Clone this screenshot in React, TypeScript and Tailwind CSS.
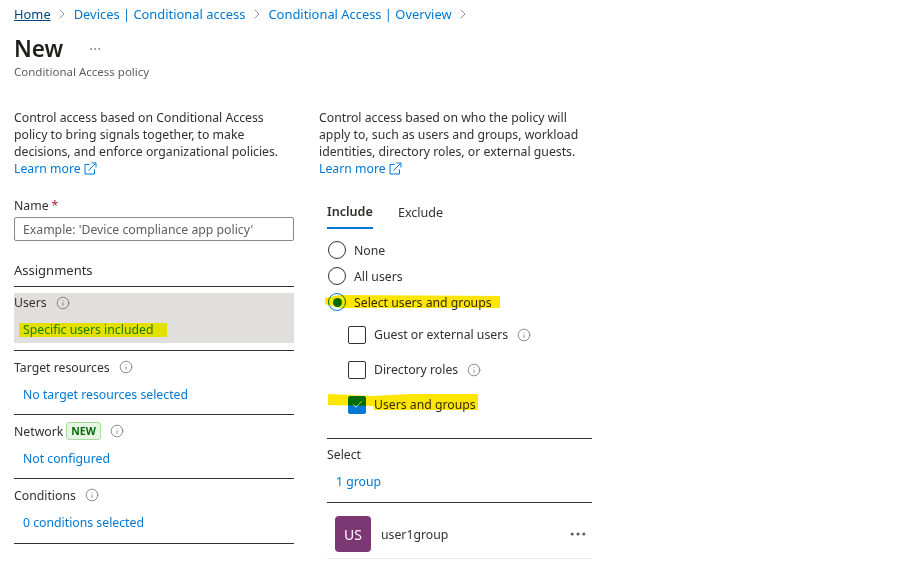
import { Check, ChevronRight, Info, MoreHorizontal } from 'lucide-react';
import type { ReactNode } from 'react';

const FONT = "font-['Noto_Sans','Open_Sans',sans-serif]";

function LearnMore() {
  return (
    <a className="flex items-center gap-[3px] text-[#0078d4]">
      Learn more
      <svg width="13" height="13" viewBox="0 0 13 13" fill="none" stroke="#0078d4" strokeWidth="1">
        <path d="M5.5 2.5H1v9.5h9.5V7.5" />
        <path d="M4.5 8.5 11.5 1.5M7.5 1h4.500v4.500" />
      </svg>
    </a>
  );
}

function InfoIcon() {
  return <Info size={14} strokeWidth={1.2} className="text-[#605e5c]" />;
}

function Crumb() {
  return <ChevronRight size={16} strokeWidth={1} className="mx-[3.5px] text-[#605e5c]" />;
}

function Assignment({ title, value, active }: { title: ReactNode; value: string; active?: boolean }) {
  return (
    <div className="h-[64px] border-b border-[#323130] pt-[6px] last:h-[65px]">
      <div className={active ? 'h-[50px] bg-[#e1dfdd]' : 'h-[50px]'}>
        <div className={`flex items-center gap-[9px] ${active ? 'h-[19px]' : 'h-[20px]'}`}>{title}<InfoIcon /></div>
        <div className="mt-[7px] pl-[9px] leading-[22px] text-[#0078d4]">
          {active ? (
            <span className="ml-[-4px] inline-block bg-[#e3e000] pl-[4px] pr-[14px] leading-[14px] text-[#1f7a00]">{value}</span>
          ) : (
            value
          )}
        </div>
      </div>
    </div>
  );
}

function Radio({ label, checked }: { label: string; checked?: boolean }) {
  return (
    <div className="flex h-[26px] items-center gap-[8px] pl-[1px]">
      <span className={`flex h-[18px] w-[18px] items-center justify-center rounded-full border ${checked ? 'border-[#0078d4]' : 'border-[#323130]'}`}>
        {checked && <span className="h-[9px] w-[9px] rounded-full bg-[#0078d4]" />}
      </span>
      {label}
    </div>
  );
}

function Box({ label, checked, info }: { label: string; checked?: boolean; info?: boolean }) {
  return (
    <div className="flex h-[35px] items-center gap-[8px] pl-[21px]">
      <span className={`flex h-[18px] w-[18px] items-center justify-center rounded-[2px] border ${checked ? 'border-[#0078d4] bg-[#0078d4]' : 'border-[#323130]'}`}>
        {checked && <Check size={13} strokeWidth={1.5} className="text-white" />}
      </span>
      {label}
      {info && <span className="ml-[1px]"><InfoIcon /></span>}
    </div>
  );
}

export default function App() {
  return (
    <div className={`relative h-[565px] w-[914px] overflow-hidden bg-white px-[14px] text-[12.25px] leading-[17px] text-[#323130] ${FONT}`}>
      {/* Breadcrumb */}
      <div className="flex h-[28px] items-center text-[12.9px] text-[#0078d4]">
        <a className="text-[#004578] underline">Home</a>
        <Crumb />
        <a>Devices | Conditional access</a>
        <Crumb />
        <a>Conditional Access | Overview</a>
        <Crumb />
      </div>

      {/* Title */}
      <div className="flex h-[36px] items-center pt-[5px]">
        <h1 className="text-[22.5px] font-semibold text-[#201f1e]">New</h1>
        <MoreHorizontal size={14} strokeWidth={1} className="ml-[25px] text-[#605e5c]" />
      </div>
      <p className="text-[11.5px] leading-[16px] text-[#605e5c]">Conditional Access policy</p>

      <div className="mt-[29px] flex gap-[25px]">
        {/* Left column */}
        <div className="w-[280px] shrink-0">
          <p>Control access based on Conditional Access policy to bring signals together, to make decisions, and enforce organizational policies.</p>
          <LearnMore />

          <div className="mt-[18px] flex h-[20px] items-center gap-[3px]">
            Name <span className="text-[#a4262c]">*</span>
          </div>
          <div className="mt-[2px] flex h-[24px] items-center rounded-[2px] border border-[#8a8886] px-[8px] text-[#605e5c]">
            Example: 'Device compliance app policy'
          </div>

          <div className="mt-[19px] flex h-[20px] items-center text-[13px]">Assignments</div>
          <div className="mt-[6px] border-t border-[#323130]">
            <Assignment title="Users" value="Specific users included" active />
            <Assignment title="Target resources" value="No target resources selected" />
            <Assignment
              title={
                <span className="flex items-center gap-[3px]">
                  Network
                  <span className="rounded-[3px] border border-[#a9dba0] bg-[#e7f6e4] px-[4px] text-[10.5px] font-bold leading-[16px] text-[#0b6a0b]">NEW</span>
                </span>
              }
              value="Not configured"
            />
            <Assignment title="Conditions" value="0 conditions selected" />
          </div>
        </div>

        {/* Right column */}
        <div className="w-[273px] shrink-0">
          <p>Control access based on who the policy will apply to, such as users and groups, workload identities, directory roles, or external guests.</p>
          <LearnMore />

          <div className="mt-[18px] pl-[8px]">
            <div className="flex h-[34px] gap-[25px] text-[12.6px]">
              <div className="flex h-[34px] items-center border-b-2 border-[#0078d4] font-semibold">Include</div>
              <div className="flex h-[34px] items-center">Exclude</div>
            </div>
            <div className="mt-[8px]">
              <Radio label="None" />
              <Radio label="All users" />
              <Radio label="Select users and groups" checked />
            </div>
            <div className="mt-[2px]">
              <Box label="Guest or external users" info />
              <Box label="Directory roles" info />
              <Box label="Users and groups" checked />
            </div>
            <div className="mt-[16px] border-t border-[#323130] pt-[6px]">
              <div className="h-[20px] leading-[20px]">Select</div>
              <div className="mt-[7px] h-[20px] pl-[9px] leading-[20px] text-[#0078d4]">1 group</div>
            </div>
            <div className="mt-[10px] h-[56px] border-t border-[#323130] pl-[8px] pt-[13px]">
              <div className="flex h-[36px] items-center gap-[10px]">
                <span className="flex h-[36px] w-[36px] items-center justify-center rounded-[4px] bg-[#7c3873] text-[14px] text-white">US</span>
                user1group
                <MoreHorizontal size={20} strokeWidth={1.75} className="ml-auto mr-[4px] text-[#605e5c]" />
              </div>
            </div>
            <div className="border-t border-[#edebe9]" />
          </div>
        </div>
      </div>

      {/* Yellow marker strokes drawn over the page */}
      <svg className="pointer-events-none absolute left-0 top-0 mix-blend-multiply" width="914" height="565" viewBox="0 0 914 565">
        <path d="M325 298 340 295 500 296 500 308 340 308 325 304Z" fill="#ffe600" />
        <path d="M328 394 372 396 410 394 478 394 478 410 374 410 374 406 328 405Z" fill="#ffe600" />
      </svg>
    </div>
  );
}
